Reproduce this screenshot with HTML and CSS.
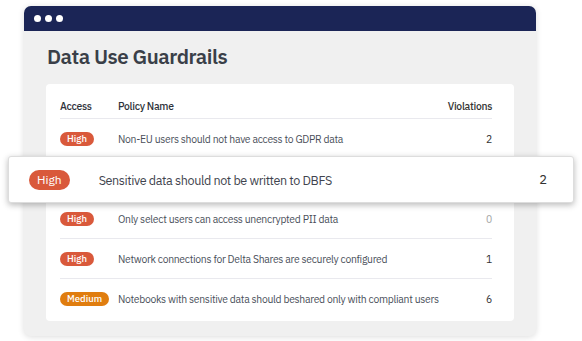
FILE: index.html
```html
<!DOCTYPE html>
<html lang="en">
<head>
    <meta charset="UTF-8">
    <title>Data Use Guardrails</title>
    <link rel="stylesheet" href="styles.css">
</head>
<body>

<div class="stage">
  <div class="window">
    <div class="titlebar">
      <span class="dot"></span><span class="dot"></span><span class="dot"></span>
    </div>

    <h1>Data Use Guardrails</h1>

    <div class="card">
      <div class="row head">
        <div class="col-access">Access</div>
        <div class="col-name">Policy Name</div>
        <div class="col-count">Violations</div>
      </div>

      <div class="row">
        <div class="col-access"><span class="badge high">High</span></div>
        <div class="col-name">Non-EU users should not have access to GDPR data</div>
        <div class="col-count">2</div>
      </div>

      <!-- la ligne sortie du tableau (voir .popout) -->
      <div class="row lifted">
        <div class="col-access"><span class="badge high">High</span></div>
        <div class="col-name">Sensitive data should not be written to DBFS</div>
        <div class="col-count">2</div>
      </div>

      <div class="row">
        <div class="col-access"><span class="badge high">High</span></div>
        <div class="col-name">Only select users can access unencrypted PII data</div>
        <div class="col-count muted">0</div>
      </div>

      <div class="row">
        <div class="col-access"><span class="badge high">High</span></div>
        <div class="col-name">Network connections for Delta Shares are securely configured</div>
        <div class="col-count">1</div>
      </div>

      <div class="row">
        <div class="col-access"><span class="badge medium">Medium</span></div>
        <div class="col-name">Notebooks with sensitive data should beshared only with compliant users</div>
        <div class="col-count">6</div>
      </div>
    </div>
  </div>

  <div class="popout">
    <span class="badge high big">High</span>
    <span class="popout-name">Sensitive data should not be written to DBFS</span>
    <span class="popout-count">2</span>
  </div>
</div>

</body>
</html>
```

FILE: styles.css
```css
body {
    margin: 0;
    background: #fff;
    font-family: 'IBM Plex Sans', 'Roboto', Arial, sans-serif;
    color: #4a4f5a;
}
.stage {
    position: relative;
    width: 582px;
    height: 341px;
    padding: 6px 0 0 24px;
    box-sizing: border-box;
}
.window {
    width: 512px;
    height: 330px;
    background: #f0f0f0;
    border-radius: 7px;
    box-shadow: 0 1px 6px rgba(0, 0, 0, 0.14);
    overflow: hidden;
}
.titlebar {
    height: 25px;
    background: #1b2556;
    display: flex;
    align-items: center;
    gap: 4px;
    padding-left: 10px;
}
.dot {
    width: 7px;
    height: 7px;
    border-radius: 50%;
    background: #fff;
}
h1 {
    margin: 0 0 14px 0;
    padding: 13px 0 0 23px;
    font-size: 20.5px;
    line-height: 26px;
    font-weight: 600;
    color: #3a3f48;
    letter-spacing: -0.5px;
}
.card {
    margin-left: 22px;
    width: 468px;
    height: 237px;
    box-sizing: border-box;
    background: #fff;
    border-radius: 4px;
    padding: 0 22px 0 14px;
}
.row {
    display: flex;
    align-items: center;
    height: 39px;
    border-bottom: 1px solid #e9e9ee;
    font-size: 10.4px;
    letter-spacing: -0.3px;
}
.row:last-child {
    border-bottom: none;
}
.row.lifted > div {
    visibility: hidden;
}
.row.head {
    height: 35px;
    align-items: flex-start;
    padding-top: 15px;
    box-sizing: border-box;
    font-weight: 500;
    color: #2e323a;
}
.col-access {
    width: 58px;
    flex: none;
}
.col-name {
    flex: 1;
}
.col-count {
    flex: none;
    text-align: right;
    color: #333;
}
.col-count.muted {
    color: #a5a5a5;
}
.badge {
    display: inline-block;
    height: 14px;
    line-height: 14px;
    padding: 0 7px;
    border-radius: 8px;
    color: #fff;
    font-size: 9.5px;
    font-weight: 500;
    letter-spacing: 0;
}
.badge.high {
    background: #d9593b;
}
.badge.medium {
    background: #e07d0f;
}
.popout {
    position: absolute;
    left: 8px;
    top: 156px;
    width: 566px;
    height: 47px;
    box-sizing: border-box;
    background: #fff;
    border: 1px solid #ddd;
    border-radius: 3px;
    box-shadow: 0 2px 6px rgba(0, 0, 0, 0.28);
    display: flex;
    align-items: center;
    padding: 0 26px 0 20px;
}
.badge.big {
    height: 20px;
    line-height: 20px;
    padding: 0 8px;
    border-radius: 10px;
    font-size: 12px;
    font-weight: 400;
}
.popout-name {
    flex: 1;
    margin-left: 29px;
    font-size: 12.6px;
    letter-spacing: -0.4px;
    color: #3f444e;
}
.popout-count {
    font-size: 13px;
    color: #333;
}
```
